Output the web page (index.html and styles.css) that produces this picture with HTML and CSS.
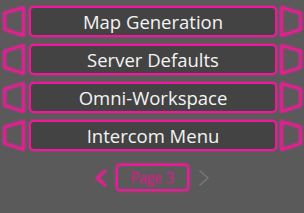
FILE: index.html
```html
<!DOCTYPE html>
<html>
<head>
<meta charset="utf-8">
<link rel="stylesheet" href="styles.css">
</head>
<body>
<div class="menu">
  <div class="row">
    <svg class="wing" viewBox="0 0 22 31" width="22" height="31"><polygon points="1.5,7 20.5,1.5 20.5,29.5 1.5,23.5"/></svg>
    <div class="btn">Map Generation</div>
    <svg class="wing" viewBox="0 0 22 31" width="22" height="31"><polygon points="1.5,1.5 20.5,7 20.5,23.5 1.5,29.5"/></svg>
  </div>
  <div class="row">
    <svg class="wing" viewBox="0 0 22 31" width="22" height="31"><polygon points="1.5,7 20.5,1.5 20.5,29.5 1.5,23.5"/></svg>
    <div class="btn">Server Defaults</div>
    <svg class="wing" viewBox="0 0 22 31" width="22" height="31"><polygon points="1.5,1.5 20.5,7 20.5,23.5 1.5,29.5"/></svg>
  </div>
  <div class="row">
    <svg class="wing" viewBox="0 0 22 31" width="22" height="31"><polygon points="1.5,7 20.5,1.5 20.5,29.5 1.5,23.5"/></svg>
    <div class="btn">Omni-Workspace</div>
    <svg class="wing" viewBox="0 0 22 31" width="22" height="31"><polygon points="1.5,1.5 20.5,7 20.5,23.5 1.5,29.5"/></svg>
  </div>
  <div class="row">
    <svg class="wing" viewBox="0 0 22 31" width="22" height="31"><polygon points="1.5,7 20.5,1.5 20.5,29.5 1.5,23.5"/></svg>
    <div class="btn">Intercom Menu</div>
    <svg class="wing" viewBox="0 0 22 31" width="22" height="31"><polygon points="1.5,1.5 20.5,7 20.5,23.5 1.5,29.5"/></svg>
  </div>
</div>
<div class="pager">
  <svg class="chev active" viewBox="0 0 12 18" width="12" height="18"><polyline points="10,2 2,9 10,16"/></svg>
  <div class="page">Page 3</div>
  <svg class="chev" viewBox="0 0 12 18" width="12" height="18"><polyline points="2,2 10,9 2,16"/></svg>
</div>
</body>
</html>
```
FILE: styles.css
```css
html, body {
  margin: 0;
  padding: 0;
  background: #5a5a5a;
  width: 304px;
  height: 213px;
  overflow: hidden;
  font-family: "Open Sans", "Noto Sans", sans-serif;
}
.menu {
  display: flex;
  flex-direction: column;
  gap: 7px;
  padding: 6px 1px 0 3px;
}
.row {
  display: flex;
  align-items: flex-start;
  height: 31px;
}
.wing {
  flex: none;
  overflow: visible;
  filter: drop-shadow(0 0 1.5px #ff1aa0);
}
.wing polygon {
  fill: none;
  stroke: #f0189a;
  stroke-width: 2;
  stroke-linejoin: round;
}
.btn {
  flex: none;
  width: 244px;
  height: 27px;
  margin: 0 3px 0 3px;
  border: 2px solid #f0189a;
  border-radius: 5px;
  background: #434343;
  box-shadow: 0 0 2px #ff1aa0;
  color: #f4f4f4;
  font-size: 18.5px;
  line-height: 27px;
  text-align: center;
}
.row .wing:first-child { margin-right: 1px; }
.pager {
  display: flex;
  align-items: center;
  justify-content: center;
  gap: 9px;
  margin-top: 13px;
  padding-left: 1px;
}
.chev {
  flex: none;
  overflow: visible;
}
.chev polyline {
  fill: none;
  stroke: #787878;
  stroke-width: 1.6;
  stroke-linejoin: round;
  stroke-linecap: round;
}
.chev.active {
  filter: drop-shadow(0 0 1.5px #ff1aa0);
}
.chev.active polyline {
  stroke: #f0189a;
  stroke-width: 2;
}
.page {
  width: 69px;
  height: 23px;
  border: 2px solid #f0189a;
  border-radius: 4px;
  box-shadow: 0 0 3px #ff1aa0;
  color: #d81689;
  font-size: 14.5px;
  font-weight: 300;
  line-height: 23px;
  text-align: center;
  text-shadow: 0 0 2px #ff1aa0;
}
```
